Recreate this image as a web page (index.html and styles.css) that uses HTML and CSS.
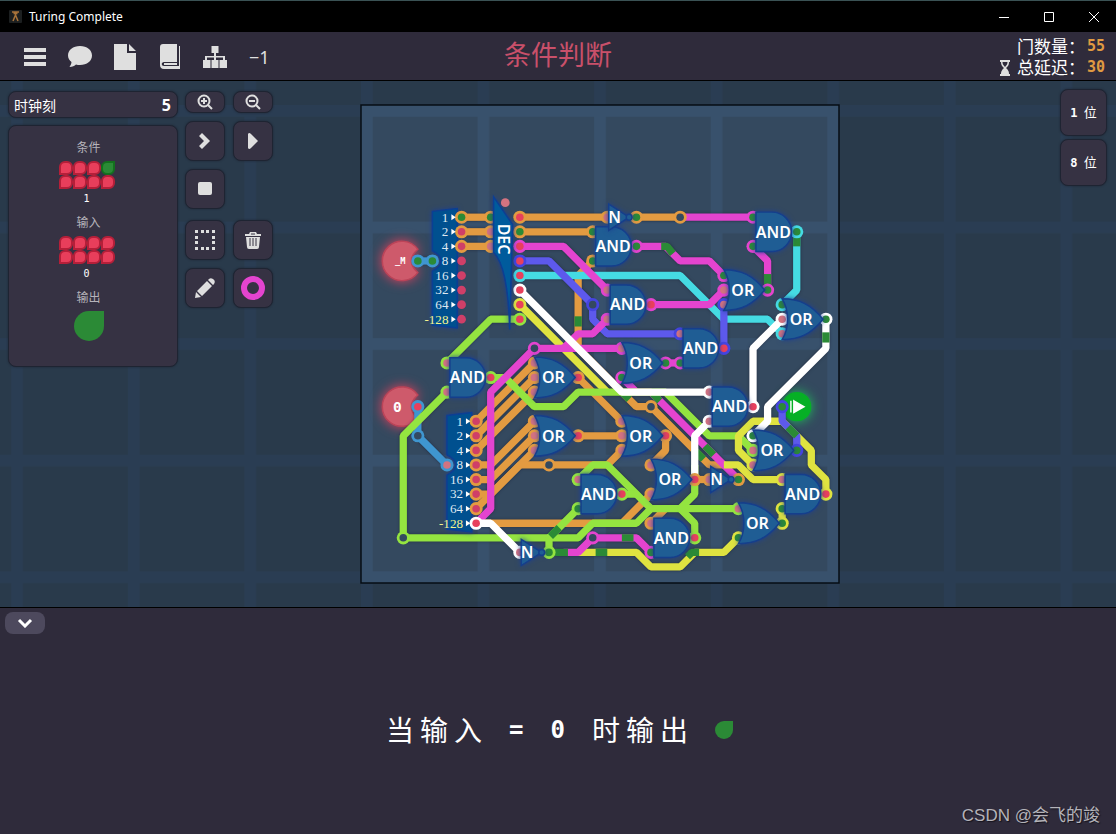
FILE: index.html
```html
<!DOCTYPE html>
<html lang="zh-CN">
<head>
  <meta charset="UTF-8" />
  <meta name="viewport" content="width=device-width, initial-scale=1.0">
  <title>Turing Complete</title>
  <link rel="stylesheet" href="styles.css">
</head>
<body>

  <div class="titlebar">
    <svg class="app-icon" viewBox="0 0 13 13"><rect width="13" height="13" rx="1" fill="#1c1f20"/><path d="M3 2h7M4.500 3.500h4M6.500 3v3M6.500 5L4 11M6.500 5L9 11" stroke="#a8733a" stroke-width="1.500" fill="none"/></svg>
    <span class="app-name">Turing Complete</span>
    <div class="window-buttons">
      <button aria-label="最小化"><svg viewBox="0 0 12 12"><path d="M1 6.500h10"/></svg></button>
      <button aria-label="最大化"><svg viewBox="0 0 12 12"><path d="M1.500 1.500h9v9h-9z"/></svg></button>
      <button aria-label="关闭"><svg viewBox="0 0 12 12"><path d="M1 1l10 10M11 1L1 11"/></svg></button>
    </div>
  </div>

  <header class="toolbar">
    <nav class="menu">
      <button aria-label="菜单"><svg viewBox="0 0 26 26"><path d="M2 4h22v4H2zM2 11h22v4H2zM2 18h22v4H2z"/></svg></button>
      <button aria-label="对话"><svg viewBox="0 0 26 26"><path d="M13 2C6 2 1 6 1 11.500c0 3 1.500 5 3.500 6.500-.2 2-1 3.500-2 5 3 0 5-1 6.500-2.500 1.200.4 2.600.5 4 .5 7 0 12-4 12-9.500S20 2 13 2z"/></svg></button>
      <button aria-label="文件"><svg viewBox="0 0 26 26"><path d="M2 0h13v9h9v17H2zM17 0l7 7h-7z"/></svg></button>
      <button aria-label="手册"><svg viewBox="0 0 26 26"><path d="M6 0h14v18H7c-3 0-3 4 0 4h15V2h1v23H7c-3 0-4-2-4-4V3c0-2 1-3 3-3zM7 19h13v2H7z"/></svg></button>
      <button aria-label="层级"><svg viewBox="0 0 26 26"><path d="M9.500 2h7v7h-2.500v3h9v4H25v8h-7.500v-8H21v-2.500h-7V16h2.500v8h-7v-8H12v-2.500H5V16h3.500v8H1v-8h2v-4h9V9H9.500z"/></svg></button>
      <span class="score">−1</span>
    </nav>
    <h1 class="level-name">条件判断</h1>
    <div class="stats">
      <div>门数量：<b>55</b></div>
      <div><svg class="hourglass" viewBox="0 0 10 16"><path d="M0 0h10v2H9c0 3-1 4-3 6 2 2 3 3 3 6h1v2H0v-2h1c0-3 1-4 3-6C2 6 1 5 1 2H0z"/><path d="M2.500 2h5c0 2-1 3.500-2.500 5-1.500-1.500-2.500-3-2.500-5z" fill="#2f2b3b"/></svg>总延迟：<b>30</b></div>
    </div>
  </header>

  <main class="workspace">
    <div class="canvas">
      <svg class="board" id="board" viewBox="-29 -77 328 328">
        <defs>
          <pattern id="outerGrid" x="-29" y="-77" width="80" height="80" patternUnits="userSpaceOnUse">
            <rect width="80" height="80" fill="#293a4b"/>
            <path d="M0 0h80v8H8v72H0z" fill="#2a3d53"/>
          </pattern>
          <pattern id="boardGrid" x="-29" y="-77" width="80" height="80" patternUnits="userSpaceOnUse">
            <rect width="80" height="80" fill="#34495f"/>
            <path d="M0 0h80v8H8v72H0z" fill="#38516c"/>
          </pattern>
          <path id="and" d="M2-13.500H13A13.500 13.500 0 0 1 13 13.500H2z"/>
          <path id="or" d="M0-14C12-14 20-10 28 0C20 10 12 14 0 14C5 6 5-6 0-14z"/>
          <g id="not"><path d="M1-9L15 0L1 9z"/><circle cx="15" cy="0" r="2"/></g>
          <path id="splitter" d="M20-4L37-6V76L20 74V37Q26 34 26 30Q26 26 20 23z"/>
          <path id="source" d="M12-8A13.500 13.500 0 1 0 12 8Q3 0 12-8z"/>
        </defs>
        <rect x="-829" y="-877" width="2400" height="2400" fill="url(#outerGrid)"/>
        <rect class="board-area" x="-29" y="-77" width="328" height="328" fill="url(#boardGrid)"/>
        <g id="sources">
          <use href="#source" class="source" x="-2" y="30"/>
          <use href="#source" class="source" x="-2" y="130"/>
          <circle class="sink" cx="270" cy="130" r="10"/>
        </g>
        <g id="wires"></g>
        <g id="pins"></g>
        <g id="gates"></g>
        <g class="splitters">
          <use href="#splitter"/>
          <use href="#splitter" x="10" y="140"/>
          <path d="M62-14L75 5L73 77Q72 34 62 24z" fill="#005b9c"/>
        </g>
        <g id="topPins"></g>
        <g id="labels"></g>
        <text class="gate-label" transform="translate(65 15) rotate(90)">DEC</text>
        <text class="io-label" x="-2" y="32">_M</text>
        <text class="io-label zero" x="-4" y="134">0</text>
        <path d="M266 126v8M268 126l7 4-7 4z" fill="#fff" stroke="#fff" stroke-width="1"/>
      </svg>
    </div>

    <div class="side">
      <div class="info">
        <div class="tick"><span>时钟刻</span><b>5</b></div>
        <div class="ports">
          <h2>条件</h2>
          <div class="bits"><i></i><i></i><i></i><i class="on"></i><i></i><i></i><i></i><i></i></div>
          <p>1</p>
          <h2>输入</h2>
          <div class="bits"><i></i><i></i><i></i><i></i><i></i><i></i><i></i><i></i></div>
          <p>0</p>
          <h2>输出</h2>
          <div class="leaf leaf-big"></div>
        </div>
      </div>
      <div class="tools">
        <button class="zoom" aria-label="放大"><svg viewBox="0 0 16 16"><path class="line" d="M11 11l4 4M7 4v6M4 7h6"/><circle class="line" cx="7" cy="7" r="5.500"/></svg></button>
        <button class="zoom" aria-label="缩小"><svg viewBox="0 0 16 16"><path class="line" d="M11 11l4 4M4 7h6"/><circle class="line" cx="7" cy="7" r="5.500"/></svg></button>
        <button aria-label="单步"><svg viewBox="0 0 20 20"><path d="M4 5l3-3 8 8-8 8-3-3 5-5z"/></svg></button>
        <button aria-label="运行"><svg viewBox="0 0 20 20"><path d="M5 3q1-2 3 0l7 7-7 7q-2 2-3 0z"/></svg></button>
        <button aria-label="停止"><svg viewBox="0 0 20 20"><rect x="3" y="3" width="14" height="13" rx="2"/></svg></button>
        <span></span>
        <button class="gap" aria-label="选择"><svg viewBox="0 0 20 20"><path d="M0 0h3v3H0zM6 0h3v3H6zM11 0h3v3h-3zM17 0h3v3h-3zM0 6h3v3H0zM17 6h3v3h-3zM0 11h3v3H0zM17 11h3v3h-3zM0 17h3v3H0zM6 17h3v3H6zM11 17h3v3h-3zM17 17h3v3h-3z"/></svg></button>
        <button class="gap" aria-label="删除"><svg viewBox="0 0 20 20"><path d="M2 4h4l1-2h6l1 2h4v2H2zM3 7h14l-1 10q0 2-2 2H6q-2 0-2-2z"/><path d="M8 4h4M7 8v8M10 8v8M13 8v8" stroke="#363243"/></svg></button>
        <button aria-label="编辑"><svg viewBox="0 0 20 20"><path d="M0 20l1-6 5 5zM2 13l10-10 5 5L7 18zM13 2q2-3 5-1t1 5l-1 1z"/></svg></button>
        <button aria-label="导线颜色"><span class="ring"></span></button>
      </div>
    </div>

    <div class="parts">
      <button><b>1</b> 位</button>
      <button><b>8</b> 位</button>
    </div>
  </main>

  <section class="console">
    <button class="collapse" aria-label="收起"><svg viewBox="0 0 16 10"><path d="M2 2l6 6 6-6"/></svg></button>
    <p class="condition">
      <span class="word"><span>当</span><span>输</span><span>入</span></span>
      <b>=</b>
      <b>0</b>
      <span class="word"><span>时</span><span>输</span><span>出</span></span>
      <span class="leaf"></span>
    </p>
    <p class="author">CSDN @会飞的竣</p>
  </section>

  <script src="script.js"></script>
</body>
</html>
```
FILE: styles.css
```css
* {
  box-sizing: border-box;
}

body {
  margin: 0;
  min-height: 100vh;
  display: flex;
  flex-direction: column;
  background: #2f2b3b;
  color: #fff;
  font-family: "Noto Sans", "Noto Sans CJK SC", sans-serif;
}

button {
  padding: 0;
  border: none;
  background: transparent;
  color: inherit;
  font-family: inherit;
  cursor: pointer;
}

svg {
  display: block;
}

/* ---- window bar ---- */
.titlebar {
  height: 32px;
  padding-left: 9px;
  display: flex;
  align-items: center;
  border-top: 1px solid #3a5254;
  background: #000;
}

.app-icon {
  width: 13px;
  height: 13px;
}

.app-name {
  margin-left: 7px;
  font-size: 12px;
  line-height: 16px;
}

.window-buttons {
  margin-left: auto;
  display: flex;
}

.window-buttons button {
  width: 45px;
  height: 31px;
  display: grid;
  place-items: center;
}

.window-buttons svg {
  width: 12px;
  height: 12px;
  fill: none;
  stroke: #fff;
  stroke-width: 1;
}

/* ---- toolbar ---- */
.toolbar {
  height: 49px;
  padding: 2px 11px 0 22px;
  display: grid;
  grid-template-columns: 1fr auto 1fr;
  align-items: center;
  border-bottom: 1px solid #000;
}

.menu {
  display: flex;
  align-items: center;
  gap: 19px;
}

.menu svg {
  width: 26px;
  height: 26px;
  fill: #dfdfdf;
}

.score {
  margin-left: 2px;
  font-size: 18px;
  line-height: 24px;
  color: #dfdfdf;
}

.level-name {
  margin: 0 11px 4px 0;
  color: #c9506a;
  font-size: 27px;
  font-weight: 400;
  line-height: 36px;
}

.stats {
  justify-self: end;
  font-size: 17px;
  line-height: 21px;
}

.stats div {
  display: flex;
  align-items: center;
  justify-content: flex-end;
}

.stats b {
  margin-left: 2px;
  color: #e09a42;
  font-family: "DejaVu Sans Mono", monospace;
  font-size: 15px;
}

.hourglass {
  width: 10px;
  height: 16px;
  margin-right: 7px;
  fill: #dfdfdf;
}

/* ---- workspace: canvas with the panels laid over it ---- */
.workspace {
  flex: 1;
  display: grid;
  grid-template-columns: auto 1fr auto;
  overflow: hidden;
  background: #293a4b;
  border-bottom: 1px solid #000;
}

.canvas {
  grid-area: 1 / 1 / 2 / 4;
  display: flex;
  align-items: center;
  justify-content: center;
  padding: 24px 0 24px 83px;
}

.board {
  width: 478px;
  max-width: 100%;
  overflow: visible;
}

.board-area {
  stroke: #050b12;
  stroke-width: 1;
}

.side {
  grid-area: 1 / 1;
  z-index: 1;
  align-self: start;
  display: flex;
  gap: 7px;
  padding: 10px 0 0 8px;
}

.info {
  width: 170px;
}

.tick,
.ports,
.tools button,
.parts button {
  background: #363243;
  border: 1px solid #1e2432;
  border-radius: 8px;
  box-shadow: 0 0 2px #1e2432;
}

.tick {
  height: 27px;
  padding: 0 6px 0 5px;
  display: flex;
  align-items: center;
  justify-content: space-between;
  font-size: 14px;
}

.tick b {
  font-size: 16px;
}

.ports {
  margin-top: 7px;
  padding: 12px 13px 25px 0;
  display: flex;
  flex-direction: column;
  align-items: center;
}

.ports h2 {
  margin: 0 0 3px 4px;
  color: #b5b3ba;
  font-size: 12px;
  font-weight: 400;
  line-height: 20px;
}

.ports p {
  margin: 0 0 5px;
  font-family: "DejaVu Sans Mono", monospace;
  font-size: 10px;
  line-height: 19px;
}

.bits {
  display: grid;
  grid-template-columns: repeat(4, 14px);
}

.bits i {
  height: 14px;
  background: #e83e5b;
  border: 2px solid #b51f39;
  border-radius: 6px 6px 6px 0;
}

.bits .on {
  background: #2b8a36;
  border-color: #13701e;
  border-radius: 6px 0 6px 6px;
}

.leaf {
  width: 18px;
  height: 18px;
  background: #2b8a36;
  border-radius: 50% 0 50% 50%;
}

.leaf-big {
  width: 30px;
  height: 30px;
  margin-left: 4px;
}

.tools {
  display: grid;
  grid-template-columns: 40px 40px;
  column-gap: 8px;
  row-gap: 8px;
  align-content: start;
}

.tools button {
  height: 40px;
  display: grid;
  place-items: center;
}

.tools .zoom {
  height: 22px;
}

.tools .gap {
  margin-top: 3px;
}

.tools svg {
  width: 20px;
  height: 20px;
  fill: #dfdfdf;
}

.tools .zoom svg {
  width: 16px;
  height: 16px;
}

.tools .line {
  fill: none;
  stroke: #dfdfdf;
  stroke-width: 2;
}

.ring {
  width: 24px;
  height: 24px;
  border: 6px solid #e444cf;
  border-radius: 50%;
}

.parts {
  grid-area: 1 / 3;
  z-index: 1;
  align-self: start;
  display: flex;
  flex-direction: column;
  gap: 3px;
  padding: 8px 9px 0 0;
}

.parts button {
  width: 47px;
  height: 47px;
  padding-bottom: 3px;
  font-size: 13px;
}

.parts b {
  margin-right: 3px;
  font-family: "DejaVu Sans Mono", monospace;
  font-size: 12px;
}

/* ---- circuit ---- */
.wire {
  fill: none;
  stroke-width: 5;
  stroke-linejoin: bevel;
}

#wires {
  filter: drop-shadow(0 0 1px rgba(20, 20, 40, 0.5));
}

.gate {
  fill: #1f5d94;
  stroke: #153f8c;
  stroke-width: 1;
  filter: drop-shadow(0 0 2px #1c3f92);
}

.gate-label {
  fill: #fff;
  font-size: 11px;
  font-weight: 600;
  text-anchor: middle;
}

.splitters {
  fill: #00508f;
  stroke: #0c3f94;
  stroke-width: 1;
  filter: drop-shadow(0 0 2px #1c3f92);
}

.source {
  fill: #ce5a6b;
  stroke: #bb4458;
  filter: drop-shadow(0 0 4px #e0415c);
}

.sink {
  fill: #06b025;
  filter: drop-shadow(0 0 4px #1fc05a);
}

.bit-label {
  fill: #dfe9f2;
  font-family: "Liberation Serif", serif;
  font-size: 9px;
  text-anchor: end;
}

.bit-label.sign {
  fill: #f4f28e;
}

.io-label {
  fill: #fff;
  font-family: "DejaVu Sans Mono", monospace;
  font-size: 6px;
  font-weight: 700;
  text-anchor: middle;
}

.io-label.zero {
  font-size: 10px;
}

/* ---- console ---- */
.console {
  min-height: 226px;
  padding: 4px 16px 6px 5px;
  display: flex;
  flex-direction: column;
}

.collapse {
  width: 40px;
  height: 22px;
  display: grid;
  place-items: center;
  background: #4d495d;
  border-radius: 8px;
}

.collapse svg {
  width: 16px;
  height: 10px;
  fill: none;
  stroke: #fff;
  stroke-width: 3;
}

.condition {
  margin: 78px 0 auto 14px;
  display: flex;
  align-items: center;
  justify-content: center;
  gap: 27px;
  font-size: 28px;
  line-height: 36px;
}

.condition b {
  font-family: "DejaVu Sans Mono", monospace;
  font-size: 24px;
}

.word {
  display: flex;
  gap: 6px;
}

.author {
  margin: 0;
  align-self: flex-end;
  color: #b4b3b9;
  font-family: "Liberation Sans", "Noto Sans CJK SC", sans-serif;
  font-size: 17px;
  line-height: 24px;
  text-shadow: 1px 1px 1px #15131c;
}
```
FILE: script.js
```js
const SVG = "http://www.w3.org/2000/svg";

const colors = {
  orange: "#e39b41",
  magenta: "#e444cf",
  violet: "#5d59ec",
  blue: "#4544e0",
  sky: "#3f96d0",
  cyan: "#45dbe3",
  white: "#ffffff",
  yellow: "#dfe340",
  lime: "#94e440",
  green: "#2b8a36",
  red: "#e8405c",
  pink: "#d37380",
  rose: "#cf3f68",
  hole: "#34495f"
};

// one grid cell is 10 units, points are [column, row]
const wires = [
  ["sky", "1,3 2,3"],
  ["sky", "1,13 1,15 3,17"],
  ["orange", "4,0 6,0"],
  ["orange", "4,1 6,1"],
  ["orange", "4,2 6,2"],
  ["orange", "8,0 14,0"],
  ["orange", "16,0 19,0"],
  ["magenta", "19,0 24,0"],
  ["orange", "8,1 13,1"],
  ["orange", "13,3 12,4 12,9 16,13 17,13 21,17 22,17"],
  ["green", "12,6.8 12,7.5"],
  ["green", "14.9,11.9 15.5,12.5"],
  ["cyan", "8,4 19,4 22,7 25,7 26,8"],
  ["violet", "8,3 10,3 13,6 13,7 14,8 19,8"],
  ["violet", "22,9 22,6"],
  ["magenta", "8,2 11,2 14,5"],
  ["magenta", "16,2 18,2 19,3 21,3 22,4"],
  ["green", "17.7,2 18.1,2 18.5,2.5"],
  ["magenta", "17,6 21,6 22,5"],
  ["magenta", "24,2 25,3 25,5"],
  ["green", "25,3.9 25,5"],
  ["cyan", "27,1 27,5 26,6"],
  ["green", "27,1 27,2"],
  ["magenta", "18,10 19,10"],
  ["yellow", "8,6 14,12"],
  ["magenta", "14,7 13,8 12,8 11,9"],
  ["orange", "5,14 9,10"],
  ["orange", "5,15 9,11"],
  ["orange", "5,16 9,12"],
  ["orange", "5,17 6,17 9,14"],
  ["orange", "5,18 6,18 9,15"],
  ["orange", "5,19 6,19 9,16"],
  ["orange", "5,20 8,17 14,17 15,16"],
  ["orange", "12,11 15,14"],
  ["orange", "12,15 15,15"],
  ["orange", "18,15 18,16 17,17"],
  ["orange", "5,21 15,21 17,19"],
  ["orange", "18,20 17,21"],
  ["magenta", "15,11 16,12 17,12 23,18"],
  ["green", "17.1,12.1 17.6,12.6"],
  ["green", "20.7,15.7 21.3,16.3"],
  ["green", "19.9,15.9 20.6,16.6"],
  ["lime", "8,7 6,7 3,10"],
  ["lime", "3,12 0,15 0,22 12,22 13,21 16,21 17,20 23,20"],
  ["lime", "6,11 7,11 9,13 11,13 12,12 18,12 21,15 23,15 24,16"],
  ["lime", "12,18 13,17 14,17 17,20"],
  ["lime", "15,19 16,19"],
  ["lime", "20,17 20,19 19,20 20,21 20,22"],
  ["lime", "10,23 10,22 12,20"],
  ["green", "10.1,21.9 10.7,21.3"],
  ["magenta", "5,21 6,20 6,12 9,9 15,9"],
  ["yellow", "12,23 16,23 17,24 19,24 20,23 22,23 23,22"],
  ["magenta", "11,23 12,23 13,22 16,22 17,23"],
  ["green", "10.4,23 11.3,23"],
  ["green", "13.2,23 14,23"],
  ["green", "15,22 15.8,22"],
  ["green", "19.5,23.3 19.8,23 20.3,23"],
  ["yellow", "22,17 23,17 24,18 26,18"],
  ["yellow", "24,17 23,16 23,15 24,14 26,14 28,16 28,17 29,18 29,19"],
  ["yellow", "26,21 26,20"],
  ["violet", "26,13 26,14 27,15 27,16"],
  ["green", "26.4,14.4 27,15"],
  ["white", "8,5 15,12 21,12"],
  ["white", "5,21 6,21 8,23"],
  ["white", "21,14 20,15 20,18"],
  ["white", "24,13 24,9 26,7"],
  ["white", "29,7 29,9 25,13 25,14 24,15"],
  ["green", "29,7.9 29,8.6"],
  ["orange", "20,18 21,18"]
];

// ring colour, inner colour, positions
const pins = [
  ["orange", "green", "6,0 8,1 13,1 13,3 16,0 23,18"],
  ["orange", "pink", "6,1 6,2 14,0 9,10 9,11 9,12 9,14 9,15 9,16 15,14 15,15 15,16 17,17 17,19 17,21 21,18"],
  ["orange", "red", "8,0 12,11 12,15 18,15 20,18"],
  ["orange", "hole", "19,0 17,13 10,17"],
  ["magenta", "red", "8,2 17,6"],
  ["magenta", "pink", "14,5 14,7 22,5 15,9"],
  ["magenta", "green", "16,2 24,0 24,2 22,4 25,5 15,11 18,10 19,10 17,23"],
  ["magenta", "hole", "9,9 13,22"],
  ["blue", "red", "8,3 22,9"],
  ["blue", "pink", "19,8 22,6"],
  ["blue", "green", "26,13 27,16"],
  ["blue", "hole", "13,6"],
  ["cyan", "red", "8,4"],
  ["cyan", "green", "27,1 26,6"],
  ["cyan", "pink", "26,8"],
  ["white", "red", "8,5 24,13"],
  ["white", "pink", "26,7 21,12 21,14 8,23"],
  ["white", "green", "29,7 24,15"],
  ["yellow", "red", "8,6 29,19"],
  ["yellow", "pink", "24,17 26,18"],
  ["yellow", "green", "26,20 26,21 23,22"],
  ["lime", "red", "8,7 6,11 15,19 20,22"],
  ["lime", "pink", "3,10 3,12 24,16 12,18 23,20"],
  ["lime", "green", "12,20 10,23"],
  ["lime", "hole", "0,22"],
  ["sky", "hole", "1,15"]
];

// pins that sit over the splitters
const topPins = [
  ["sky", "green", "1,3 2,3"],
  ["sky", "red", "1,13"],
  ["sky", "pink", "3,17"],
  ["orange", "green", "4,0"],
  ["orange", "rose", "4,1 4,2 5,14 5,15 5,16 5,17 5,18 5,19 5,20"],
  ["white", "red", "5,21"],
  [null, "rose", "4,3 4,4 4,5 4,6 4,7"],
  [null, "pink", "7,-1"]
];

const gates = [
  { type: "and", label: "AND", labelX: 14, at: "13,2 14,6 24,1 19,9 3,11 21,13 12,19 26,19 17,22" },
  { type: "or", label: "OR", labelX: 13, at: "22,5 26,7 15,10 9,11 9,15 15,15 24,16 17,18 23,21" },
  { type: "not", label: "N", labelX: 5, at: "14,0 21,18 8,23" }
];

function parse(points) {
  return points.split(" ").map(p => p.split(",").map(n => Math.round(n * 10)));
}

function add(parentId, tag, attrs, text) {
  const el = document.createElementNS(SVG, tag);
  for (const key in attrs) el.setAttribute(key, attrs[key]);
  if (text) el.textContent = text;
  document.getElementById(parentId).appendChild(el);
}

function drawPins(parentId, list) {
  list.forEach(([ring, inner, points]) => {
    parse(points).forEach(([cx, cy]) => {
      if (ring) add(parentId, "circle", { cx, cy, r: 4.5, fill: colors[ring] });
      add(parentId, "circle", { cx, cy, r: ring ? 2.6 : 3, fill: colors[inner] });
    });
  });
}

wires.forEach(([color, points]) => {
  add("wires", "polyline", { class: "wire", points: parse(points).join(" "), stroke: colors[color] });
});

drawPins("pins", pins);
drawPins("topPins", topPins);

gates.forEach(({ type, label, labelX, at }) => {
  parse(at).forEach(([x, y]) => {
    add("gates", "use", { href: "#" + type, class: "gate", x, y });
    add("labels", "text", { class: "gate-label", x: x + labelX, y: y + 4 }, label);
  });
});

[[31, 0], [41, 140]].forEach(([x, y]) => {
  ["1", "2", "4", "8", "16", "32", "64", "-128"].forEach((label, i) => {
    const rowY = y + i * 10;
    add("labels", "text", { class: label === "-128" ? "bit-label sign" : "bit-label", x, y: rowY + 3 }, label);
    add("labels", "path", { d: `M${x + 2} ${rowY - 2}l3 2-3 2z`, fill: "#fff" });
  });
});
```
